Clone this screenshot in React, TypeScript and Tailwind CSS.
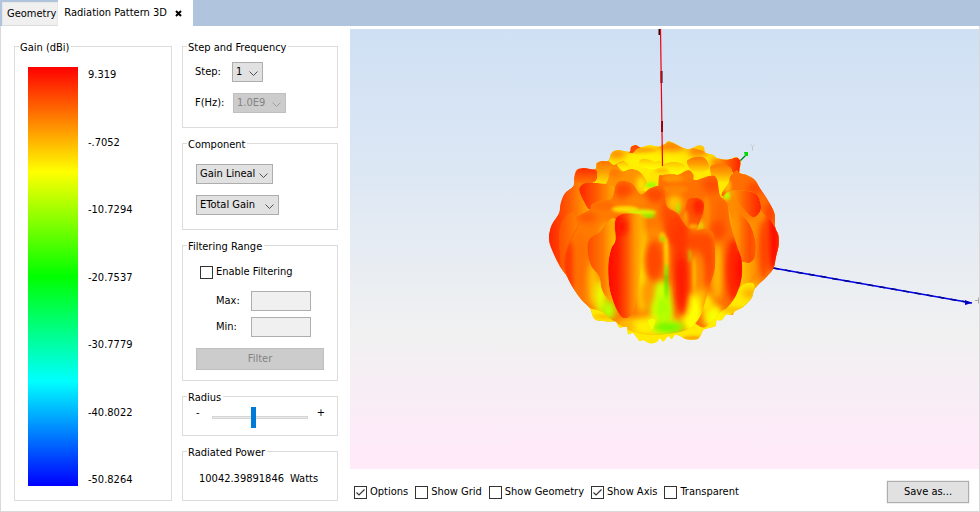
import { useState } from 'react'
import type { ReactNode } from 'react'

const gainLabels = ['9.319', '-.7052', '-10.7294', '-20.7537', '-30.7779', '-40.8022', '-50.8264']

// Turns "x,y x,y ..." into a closed smooth curve
function smooth(points: string) {
  const p = points.split(' ').map((pair) => pair.split(',').map(Number))
  const n = p.length
  let d = `M${p[0][0]},${p[0][1]}`
  for (let i = 0; i < n; i++) {
    const a = p[(i + n - 1) % n]
    const b = p[i]
    const c = p[(i + 1) % n]
    const e = p[(i + 2) % n]
    d += `C${b[0] + (c[0] - a[0]) / 6},${b[1] + (c[1] - a[1]) / 6} ${c[0] - (e[0] - b[0]) / 6},${c[1] - (e[1] - b[1]) / 6} ${c[0]},${c[1]}`
  }
  return d + 'Z'
}

const outline =
  '27,320 35,285 57,250 62,220 75,190 100,168 103,140 110,120 130,114 165,118 170,100 185,93 205,92 215,68 235,60 268,65 273,50 288,45 302,52 330,46 355,50 375,42 385,34 402,40 425,52 445,58 465,50 480,46 492,52 496,68 520,75 530,84 555,89 575,86 590,82 602,95 599,127 622,136 645,150 660,175 685,213 703,250 705,290 715,315 716,345 708,380 700,415 680,440 645,475 635,503 610,530 585,543 578,555 560,553 545,570 530,571 526,588 505,594 490,600 480,620 470,628 440,628 420,618 405,615 395,628 385,618 370,635 360,625 350,636 330,640 310,630 298,632 280,610 265,612 260,590 238,592 228,575 205,575 165,568 150,535 125,510 100,475 78,435 60,410 45,380 30,345'

// shades: [cx, cy, rx, ry, color], blurred and kept inside the lobe's own edge
type Shade = [number, number, number, number, string]
type Lobe = { at: string; fill: string; shades?: Shade[] }

const lobes: Lobe[] = [
  // crown, back rows
  {
    at: '165,118 170,100 205,92 215,68 235,60 268,65 302,52 380,30 430,45 500,65 590,80 610,130 560,200 380,200 250,180 180,150',
    fill: '#ffea00',
    shades: [
      [230, 72, 28, 14, '#ff8800'],
      [300, 60, 50, 10, '#ffa800'],
      [395, 48, 45, 16, '#ff8000'],
      [475, 62, 34, 18, '#ff8200'],
      [550, 98, 40, 18, '#ff7c00'],
      [340, 95, 80, 16, '#fff400'],
    ],
  },
  { at: '268,68 273,50 288,45 302,52 290,58 280,68', fill: '#ff4a00' },
  { at: '163,120 170,100 185,93 205,93 220,104 235,98 252,94 266,108 270,125 255,150 200,165 160,160', fill: 'url(#topDown)' },
  { at: '103,140 112,120 130,114 165,118 172,135 165,155 130,160 105,168', fill: 'url(#topDownRed)' },
  { at: '230,104 240,98 255,95 265,106 275,125 250,125', fill: 'url(#bump)' },
  { at: '295,100 305,87 325,88 345,95 360,92 365,108 340,118 305,112', fill: 'url(#bump)' },
  { at: '362,112 378,100 400,96 425,100 436,112 425,130 385,130', fill: 'url(#bump)' },
  { at: '440,95 460,82 485,80 500,90 508,115 480,130 455,122', fill: 'url(#topDown)' },
  { at: '510,112 525,103 550,102 566,105 577,125 575,145 550,160 520,150', fill: 'url(#topDown)' },
  { at: '530,90 555,88 575,86 590,82 602,95 598,127 580,130 570,112 545,100', fill: 'url(#rightRed)' },
  {
    at: '205,145 210,122 225,115 245,125 270,117 295,122 312,140 322,165 310,195 270,190 215,200 195,175',
    fill: '#ff9200',
    shades: [
      [225, 128, 20, 14, '#ff7400'],
      [305, 165, 14, 28, '#fff000'],
      [212, 190, 10, 16, '#eeff00'],
    ],
  },
  {
    at: '310,180 322,152 335,125 355,115 375,112 395,135 385,155 345,170 325,185',
    fill: '#ffe600',
    shades: [
      [333, 165, 18, 8, '#9cff00'],
      [316, 132, 10, 7, '#d0ff00'],
      [365, 122, 20, 8, '#ffc000'],
    ],
  },
  // left flank
  { at: '57,250 62,220 75,190 100,168 125,160 120,185 138,220 150,240 108,265 100,250 75,285 58,330 62,400 42,375 27,320 35,285', fill: 'url(#leftRed)' },
  { at: '57,320 62,285 80,255 102,248 112,285 98,315 82,350 74,395 75,432 62,400', fill: 'url(#leftOrange)' },
  { at: '118,182 122,168 140,158 180,160 215,165 225,185 215,208 180,215 150,238 132,215', fill: 'url(#leftRed)' },
  // right flank
  {
    at: '548,200 570,180 620,178 645,188 690,265 720,315 720,345 704,415 678,445 640,485 590,520 590,330 568,245',
    fill: '#ff8c00',
    shades: [
      [700, 330, 24, 95, '#ff0a00'],
      [672, 360, 16, 90, '#ff4200'],
      [610, 360, 26, 130, '#ffa200'],
      [620, 240, 28, 36, '#ff7c00'],
      [560, 196, 12, 14, '#c8f000'],
      [635, 480, 30, 20, '#ffc000'],
    ],
  },
  {
    at: '597,127 622,136 645,150 660,175 685,213 706,250 708,295 690,270 662,240 658,208 645,190 620,183 570,183 548,200 545,190 565,160 570,140 590,120',
    fill: '#ff6e00',
    shades: [
      [645, 175, 24, 18, '#ff4a00'],
      [690, 250, 14, 34, '#ff3c00'],
      [562, 168, 12, 20, '#ffb400'],
    ],
  },
  {
    at: '574,185 620,183 645,190 658,208 662,240 640,262 610,235',
    fill: 'url(#rightRed)',
  },
  { at: '592,250 620,270 637,300 647,340 645,378 638,392 620,403 604,405 585,350 575,260', fill: 'url(#rightWarm)' },
  { at: '600,402 630,398 645,388 647,425 630,450 605,470', fill: 'url(#rightAmber)' },
  // skirt
  {
    at: '600,470 640,460 640,500 610,532 585,545 545,572 525,590 490,602 470,630 440,630 400,620 330,645 260,620 160,570 150,500 300,480 500,500 560,530',
    fill: '#ffea00',
    shades: [
      [630, 490, 24, 16, '#ffb000'],
      [575, 540, 50, 10, '#ffc800'],
      [200, 560, 40, 8, '#ffc400'],
      [460, 625, 34, 7, '#ffa000'],
      [530, 560, 28, 18, '#fff800'],
    ],
  },
  // right shoulder with the long outer column
  {
    at: '355,152 370,135 400,133 415,134 445,120 460,133 465,150 510,137 530,145 540,195 562,222 570,275 590,345 605,392 605,440 590,492 565,530 540,548 520,570 480,590 400,500 360,300',
    fill: '#ff7000',
    shades: [
      [400, 145, 34, 12, '#ff9400'],
      [445, 140, 20, 14, '#ff8000'],
      [520, 165, 34, 24, '#ff5000'],
      [545, 250, 18, 40, '#ff6400'],
      [405, 178, 38, 12, '#ff8400'],
      [404, 220, 24, 26, '#ffc600'],
      [414, 235, 5, 16, '#a8f000'],
      [440, 275, 18, 16, '#ff9c00'],
      [482, 287, 14, 14, '#e4f400'],
      [500, 250, 10, 50, '#ff8a00'],
      [535, 300, 24, 30, '#ff4c00'],
      [532, 425, 18, 85, '#ffb800'],
      [583, 420, 26, 95, '#ff2400'],
      [600, 420, 10, 60, '#ff1000'],
      [520, 560, 30, 36, '#f8ff00'],
      [500, 520, 20, 30, '#ffe800'],
    ],
  },
  {
    at: '430,265 436,235 444,208 462,203 478,206 491,218 491,240 484,265 468,298 450,296 438,284',
    fill: '#ff5600',
    shades: [
      [476, 230, 18, 26, '#ff1c00'],
      [435, 270, 10, 30, '#ff9600'],
      [460, 290, 16, 8, '#ffa800'],
    ],
  },
  // front mass
  {
    at: '108,265 130,250 150,238 156,222 185,210 215,205 229,162 248,152 278,162 303,193 330,175 355,167 372,172 380,228 412,250 435,285 460,302 500,296 520,310 524,335 525,410 512,460 497,510 480,560 440,600 350,615 280,605 220,573 185,545 150,535 125,512 92,465 72,400 82,355 100,318 113,290',
    fill: '#ff7a00',
    shades: [
      [140, 262, 30, 16, '#ff5800'],
      [250, 180, 28, 24, '#ff4a00'],
      [345, 195, 30, 24, '#ff4a00'],
      [190, 228, 36, 12, '#ff6c00'],
      [290, 215, 34, 14, '#ff8600'],
      [255, 238, 40, 10, '#ffdc00'],
      [305, 248, 44, 10, '#d8f400'],
      [325, 258, 20, 5, '#78ff00'],
      [88, 410, 20, 80, '#ff3600'],
      [120, 400, 20, 100, '#ff7000'],
      [200, 310, 20, 30, '#ffb400'],
      [160, 460, 16, 70, '#ffc000'],
      [182, 500, 18, 50, '#e8ff00'],
      [205, 540, 22, 30, '#b8ff00'],
      [290, 320, 20, 60, '#ff9000'],
      [313, 340, 14, 40, '#ffb800'],
      [306, 450, 14, 100, '#ffe400'],
      [385, 245, 24, 40, '#ff5000'],
      [410, 300, 38, 50, '#ff4000'],
      [470, 335, 40, 28, '#ff4c00'],
      [500, 390, 26, 80, '#ff4a00'],
      [476, 440, 16, 70, '#ff8c00'],
      [482, 500, 20, 24, '#ffb400'],
      [345, 310, 22, 16, '#ff8c00'],
      [367, 322, 10, 16, '#ffc400'],
      [378, 380, 8, 60, '#ffe000'],
      [365, 530, 36, 80, '#d0ff00'],
      [455, 550, 34, 60, '#ffff00'],
      [340, 590, 90, 30, '#fff000'],
      [255, 590, 30, 24, '#ffb800'],
      [342, 392, 26, 58, '#ff4600'],
      [322, 490, 18, 36, '#ff9a00'],
      [368, 328, 4, 6, '#40ff00'],
      [379, 455, 4, 55, '#3cf000'],
      [370, 540, 18, 40, '#a4ff00'],
      [385, 592, 46, 16, '#68fa00'],
      [447, 378, 5, 20, '#b0f000'],
      [462, 440, 5, 60, '#ffc800'],
    ],
  },
  { at: '142,355 150,325 180,305 198,280 222,265 245,310 225,500 200,502 184,475 178,440 152,405', fill: 'url(#leftWarm)' },
  {
    at: '225,275 240,255 275,250 315,256 335,272 320,330 305,400 295,470 280,545 255,565 235,548 218,510 207,465 205,400 214,355 226,330',
    fill: 'url(#mainRed)',
  },
  { at: '325,570 330,592 338,597 346,570', fill: '#f4ff00' },
  { at: '363,560 370,576 378,568 382,552 372,540', fill: '#b4ff00' },
]

// Columns without an edge of their own, drawn last
const columns: Shade[] = [
  [420, 370, 24, 90, '#ff3400'],
  [425, 470, 22, 90, '#ff1c00'],
  [246, 290, 14, 24, '#ff1000'],
]

type Grad = { id: string; down?: boolean; stops: [number, string][] }

const gradients: Grad[] = [
  { id: 'body', stops: [[0, '#ff2800'], [0.25, '#ff9c00'], [0.5, '#fff000'], [0.75, '#ffa800'], [1, '#ff1000']] },
  { id: 'topDown', down: true, stops: [[0, '#ff7400'], [0.45, '#ff9e00'], [1, '#ffec00']] },
  { id: 'topDownRed', down: true, stops: [[0, '#ff2c00'], [1, '#ff8400']] },
  { id: 'bump', down: true, stops: [[0, '#ffc000'], [0.5, '#ffe800'], [1, '#ffff00']] },
  { id: 'leftRed', stops: [[0, '#ff2400'], [0.5, '#ff5e00'], [1, '#ffac00']] },
  { id: 'leftOrange', stops: [[0, '#ff5000'], [1, '#ff8000']] },
  { id: 'leftWarm', stops: [[0, '#ff4a00'], [0.45, '#ff7800'], [0.8, '#ffc000'], [1, '#ffff00']] },
  { id: 'mainRed', stops: [[0, '#ff0800'], [0.22, '#ff2000'], [0.42, '#ff5200'], [0.6, '#ff9200'], [0.74, '#ffb400c0'], [0.92, '#ffd80000']] },
  { id: 'rightWarm', stops: [[0, '#ffa40000'], [0.4, '#ff7600'], [0.75, '#ff4c00'], [1, '#ff5c00']] },
  { id: 'rightRed', stops: [[0, '#ff9e00'], [0.45, '#ff6000'], [1, '#ff2000']] },
  { id: 'rightAmber', stops: [[0, '#ffc800'], [1, '#ff8c00']] },
]

function RadiationPlot() {
  return (
    <svg viewBox="350 29 629 440" className="block h-full w-full" role="img" aria-label="Radiation pattern">
      <defs>
        {gradients.map((g) => (
          <linearGradient key={g.id} id={g.id} x1="0" y1="0" x2={g.down ? 0 : 1} y2={g.down ? 1 : 0}>
            {g.stops.map(([offset, color]) => (
              <stop key={offset} offset={offset} stopColor={color} />
            ))}
          </linearGradient>
        ))}
        <clipPath id="shape">
          <path d={smooth(outline)} />
        </clipPath>
        {lobes.map((lobe, i) => (
          <clipPath key={i} id={`lobe${i}`}>
            <path d={smooth(lobe.at)} />
          </clipPath>
        ))}
        <filter id="soften" filterUnits="userSpaceOnUse" x="-50" y="-50" width="850" height="760">
          <feGaussianBlur stdDeviation="10" />
        </filter>
        <filter id="softenFine" filterUnits="userSpaceOnUse" x="-50" y="-50" width="850" height="760">
          <feGaussianBlur stdDeviation="4" />
        </filter>
      </defs>

      {/* X and Y axes */}
      <path d="M773,268 L972,303" stroke="#0000f0" strokeWidth="1.5" />
      <path d="M773,268 L972,303" stroke="#000090" strokeWidth="1.5" strokeDasharray="6 6" />
      <path d="M965,300 L972,303 L965,305 Z" fill="#0000c8" />
      <path d="M975,300.500 h4 M978.500,297.500 v6" stroke="#a9a9a9" />
      <path d="M738,163 L747,154" stroke="#007c1c" strokeWidth="1.2" />
      <path d="M744,152 h4 v4 h-3 Z" fill="#00dc00" />
      <path d="M750.500,144.500 l2,2 l2,-2 M752.500,146.500 v4" fill="none" stroke="#c6c6ca" />

      <g transform="translate(540 130) scale(0.333333)">
        <g clipPath="url(#shape)">
          <rect width="750" height="660" fill="url(#body)" />
          {lobes.map((lobe, i) => (
            <g key={i} clipPath={`url(#lobe${i})`}>
              <path d={smooth(lobe.at)} fill={lobe.fill} />
              {lobe.shades?.map(([cx, cy, rx, ry, color], j) => (
                <ellipse key={j} cx={cx} cy={cy} rx={rx} ry={ry} fill={color} filter={Math.min(rx, ry) > 12 ? 'url(#soften)' : 'url(#softenFine)'} />
              ))}
            </g>
          ))}
          {columns.map(([cx, cy, rx, ry, color], j) => (
            <ellipse key={j} cx={cx} cy={cy} rx={rx} ry={ry} fill={color} filter="url(#soften)" />
          ))}
        </g>
      </g>

      {/* Z axis runs in front of the crown */}
      <path d="M659.500,29 V35 M661.500,71 V83 M662,121 V132" stroke="#300000" strokeWidth="2" />
      <path d="M660.500,29 L662.500,166" stroke="#f00010" strokeWidth="1.2" />
    </svg>
  )
}

function Group({ title, className, children }: { title: string; className: string; children: ReactNode }) {
  return (
    <fieldset className={`relative min-w-0 border border-[#dcdcdc] ${className}`}>
      <legend className="absolute -top-[7px] left-1 bg-white pl-px pr-0.5 leading-4">{title}</legend>
      {children}
    </fieldset>
  )
}

function Combo({ label, value, className, disabled }: { label: string; value: string; className: string; disabled?: boolean }) {
  return (
    <div className={`relative h-5 ${className} ${disabled ? 'text-[#838383]' : ''}`}>
      <select
        aria-label={label}
        disabled={disabled}
        className={`block h-full w-full appearance-none border pl-[3px] opacity-100 ${disabled ? 'border-[#bfbfbf] bg-[#cccccc]' : 'border-[#adadad] bg-[#e1e1e1]'}`}
      >
        <option>{value}</option>
      </select>
      <svg viewBox="0 0 9 6" className="pointer-events-none absolute right-[5px] top-[9px] h-1.5 w-[9px]">
        <path d="M.5,.5 L4.500,4.500 L8.500,.5" fill="none" stroke={disabled ? '#a0a0a0' : '#505050'} />
      </svg>
    </div>
  )
}

function Check({ label, on }: { label: string; on?: boolean }) {
  const [checked, setChecked] = useState(!!on)
  return (
    <label className="flex items-center gap-[3px] whitespace-nowrap">
      <span className="relative block size-[13px]">
        <input
          type="checkbox"
          checked={checked}
          onChange={() => setChecked(!checked)}
          className="block size-full appearance-none border border-[#333333] bg-white"
        />
        {checked && (
          <svg viewBox="0 0 13 13" className="pointer-events-none absolute inset-0">
            <path d="M2.500,6.500 L5,9 L10.500,3.500" fill="none" stroke="#333333" strokeWidth="1.2" />
          </svg>
        )}
      </span>
      {label}
    </label>
  )
}

export default function App() {
  return (
    <div className="flex min-h-screen flex-col bg-white font-['DejaVu_Sans_Condensed','DejaVu_Sans',sans-serif] text-[11px] leading-4 text-black">
      <div role="tablist" className="flex h-[26px] items-end bg-[#b0c4de] pl-0.5">
        <button role="tab" aria-selected="false" className="h-6 border border-b-[#dcdcdc] border-[#e8e8e8] bg-[#f0f0f0] pl-1 pr-px">
          Geometry
        </button>
        <div className="flex h-[26px] items-center bg-white pl-1.5">
          <button role="tab" aria-selected="true">Radiation Pattern 3D</button>
          <button aria-label="Close tab" className="ml-1 flex size-4 items-center justify-center">
            <svg viewBox="0 0 7 7" className="size-[7px]">
              <path d="M1,1 L6,6 M6,1 L1,6" stroke="#000" strokeWidth="2" />
            </svg>
          </button>
          <span className="w-1.5" />
        </div>
      </div>

      <main className="flex flex-1 border-b border-l border-r border-[#d9d9d9] pt-[3px]">
        <div className="flex w-[349px] shrink-0 gap-2.5 pb-2.5 pl-[13px] pr-3 pt-[17px]">
          <Group title="Gain (dBi)" className="w-[158px] shrink-0">
            <div className="flex h-full gap-2.5 pb-3.5 pl-[13px] pt-5">
              <div className="w-[50px] bg-[linear-gradient(#ff0000,#ffff00_25%,#00ff00_50%,#00ffff_75%,#0000ff)]" />
              <ul className="-mb-0.5 flex flex-col justify-between">
                {gainLabels.map((g) => (
                  <li key={g}>{g}</li>
                ))}
              </ul>
            </div>
          </Group>

          <div className="flex flex-1 flex-col justify-between">
            <Group title="Step and Frequency" className="h-[82px]">
              <div className="grid gap-[11px] pl-3 pt-[15px]">
                <div className="flex items-center">
                  <span className="w-[37px]">Step:</span>
                  <Combo label="Step" value="1" className="w-[31px]" />
                </div>
                <div className="flex items-center">
                  <span className="w-[38px]">F(Hz):</span>
                  <Combo label="F(Hz)" value="1.0E9" className="w-[53px]" disabled />
                </div>
              </div>
            </Group>

            <Group title="Component" className="h-[87px]">
              <div className="grid gap-[11px] pl-[13px] pt-5">
                <Combo label="Gain type" value="Gain Lineal" className="w-[77px]" />
                <Combo label="Gain component" value="ETotal Gain" className="w-[83px]" />
              </div>
            </Group>

            <Group title="Filtering Range" className="h-[136px]">
              <div className="flex flex-col px-[13px] pt-[18px]">
                <div className="pl-1">
                  <Check label="Enable Filtering" />
                </div>
                <div className="mt-[11px] grid gap-1.5 pl-5">
                  <label className="flex items-center">
                    <span className="w-[35px]">Max:</span>
                    <input disabled className="h-5 w-[60px] border border-[#adadb2] bg-[#f0f0f0]" />
                  </label>
                  <label className="flex items-center">
                    <span className="w-[35px]">Min:</span>
                    <input disabled className="h-5 w-[60px] border border-[#adadb2] bg-[#f0f0f0]" />
                  </label>
                </div>
                <button disabled className="mt-[11px] h-[22px] border border-[#bfbfbf] bg-[#cccccc] text-[#838383]">
                  Filter
                </button>
              </div>
            </Group>

            <Group title="Radius" className="h-[40px]">
              <div className="flex pl-[13px] pr-3 pt-2">
                <span className="w-4">-</span>
                <input
                  type="range"
                  aria-label="Radius"
                  defaultValue={43}
                  className="mt-0.5 h-[21px] w-[96px] appearance-none bg-transparent [&::-webkit-slider-runnable-track]:h-[3px] [&::-webkit-slider-runnable-track]:border [&::-webkit-slider-runnable-track]:border-[#d6d6d6] [&::-webkit-slider-runnable-track]:bg-[#e7eaea] [&::-webkit-slider-thumb]:mt-[-10px] [&::-webkit-slider-thumb]:h-[21px] [&::-webkit-slider-thumb]:w-[5px] [&::-webkit-slider-thumb]:appearance-none [&::-webkit-slider-thumb]:bg-[#007ad9]"
                />
                <span className="ml-auto">+</span>
              </div>
            </Group>

            <Group title="Radiated Power" className="h-[50px]">
              <div className="flex gap-1.5 pl-4 pt-[19px]">
                <span>10042.39891846</span>
                <span>Watts</span>
              </div>
            </Group>
          </div>
        </div>

        <div className="flex min-w-0 flex-1 flex-col">
          <div className="min-h-[440px] flex-1 basis-0 bg-[linear-gradient(#cfe0f4,#dce7f4_32%,#f1f1f1_70%,#ffeafa_96%)]">
            <RadiationPlot />
          </div>
          <div className="flex h-[42px] items-center justify-between pl-1 pr-2.5 pt-1">
            <div className="flex gap-[7px]">
              <Check label="Options" on />
              <Check label="Show Grid" />
              <Check label="Show Geometry" />
              <Check label="Show Axis" on />
              <Check label="Transparent" />
            </div>
            <button className="h-[22px] w-[82px] border border-[#adadad] bg-[#e1e1e1] outline outline-[#f0f0f0]">Save as...</button>
          </div>
        </div>
      </main>
    </div>
  )
}
